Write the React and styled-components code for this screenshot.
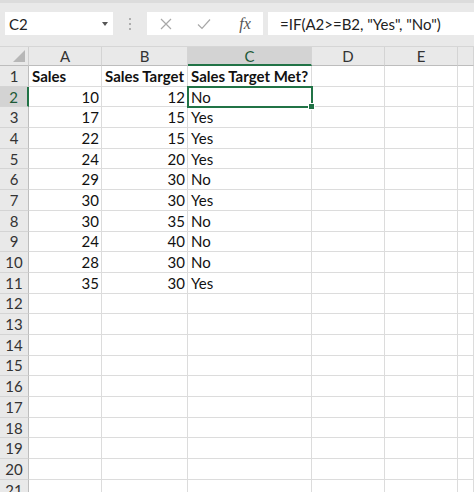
import React from "react";
import styled, { createGlobalStyle } from "styled-components";

const Global = createGlobalStyle`
  html, body { margin: 0; padding: 0; background: #ffffff; }
  body { font-family: Lato, "Open Sans", sans-serif; overflow: hidden; }
`;

const Page = styled.div`
  width: 474px;
  height: 492px;
  overflow: hidden;
  background: #ffffff;
  display: flex;
  flex-direction: column;
`;

const Toolbar = styled.div`
  height: 47px;
  flex: none;
  box-sizing: border-box;
  background: #e9e9e9;
  border-top: 3px solid #dcdcdc;
  border-bottom: 1px solid #d6d6d6;
  display: flex;
  align-items: flex-start;
  padding: 9px 0 0 5px;
`;

const NameBox = styled.div`
  width: 108px;
  height: 23px;
  background: #ffffff;
  display: flex;
  align-items: center;
  justify-content: space-between;
  box-sizing: border-box;
  padding: 0 5px 0 4px;
  font-size: 15px;
  color: #222;
`;

const Caret = styled.span`
  width: 0;
  height: 0;
  border-left: 3.5px solid transparent;
  border-right: 3.5px solid transparent;
  border-top: 4px solid #555;
`;

const Dots = styled.div`
  width: 34px;
  height: 23px;
  display: flex;
  flex-direction: column;
  align-items: center;
  justify-content: center;
  gap: 3px;
  & > span {
    width: 2px;
    height: 2px;
    border-radius: 50%;
    background: #9a9a9a;
  }
`;

const ButtonBox = styled.div`
  width: 116px;
  height: 23px;
  background: #ffffff;
  display: flex;
  align-items: center;
  margin-right: 5px;
`;

const IconSlot = styled.div`
  width: 38px;
  display: flex;
  justify-content: center;
  align-items: center;
`;

const Fx = styled.span`
  font-family: "Liberation Serif", serif;
  font-style: italic;
  font-size: 16px;
  color: #555;
  margin-left: 6px;
`;

const FormulaInput = styled.div`
  flex: 1;
  height: 23px;
  background: #ffffff;
  box-sizing: border-box;
  padding-left: 12px;
  display: flex;
  align-items: center;
  font-size: 15px;
  color: #222;
  white-space: nowrap;
`;

const Grid = styled.div`
  display: grid;
  grid-template-columns: 29px 73px 86px 124px 73px 73px 1fr;
  grid-template-rows: 19px;
  grid-auto-rows: 20.7px;
`;

const Corner = styled.div`
  background: #e9e9e9;
  border-right: 1px solid #cfcfcf;
  border-bottom: 1px solid #bdbdbd;
  position: relative;
  &::after {
    content: "";
    position: absolute;
    right: 3px;
    bottom: 3px;
    width: 0;
    height: 0;
    border-left: 12px solid transparent;
    border-bottom: 12px solid #b7b7b7;
  }
`;

const ColHead = styled.div`
  background: ${(p) => (p.$active ? "#d3d3d3" : "#e9e9e9")};
  border-right: 1px solid #d4d4d4;
  border-bottom: ${(p) => (p.$active ? "2px solid #217346" : "1px solid #bdbdbd")};
  box-sizing: border-box;
  display: flex;
  align-items: center;
  justify-content: center;
  font-size: 15px;
  color: ${(p) => (p.$active ? "#1d5a37" : "#333")};
`;

const RowHead = styled.div`
  background: ${(p) => (p.$active ? "#d3d3d3" : "#e9e9e9")};
  border-right: ${(p) => (p.$active ? "2px solid #217346" : "1px solid #bdbdbd")};
  border-bottom: 1px solid #d4d4d4;
  box-sizing: border-box;
  display: flex;
  align-items: center;
  justify-content: center;
  font-size: 15px;
  color: ${(p) => (p.$active ? "#1d5a37" : "#333")};
`;

const Cell = styled.div`
  position: relative;
  box-sizing: border-box;
  border-right: 1px solid #dcdcdc;
  border-bottom: 1px solid #dcdcdc;
  display: flex;
  align-items: center;
  justify-content: ${(p) => (p.$num ? "flex-end" : "flex-start")};
  padding: ${(p) => (p.$num ? "0 2px 0 0" : "0 0 0 3px")};
  font-size: 15px;
  font-weight: ${(p) => (p.$bold ? 700 : 400)};
  color: #111;
  white-space: nowrap;
  overflow: visible;
  ${(p) =>
    p.$selected &&
    `
    outline: 2px solid #217346;
    outline-offset: -1px;
    z-index: 2;
  `}
`;

const Handle = styled.span`
  position: absolute;
  right: -4px;
  bottom: -4px;
  width: 5px;
  height: 5px;
  background: #217346;
  border: 1px solid #ffffff;
`;

const columns = ["A", "B", "C", "D", "E", ""];

const data = [
  [10, 12, "No"],
  [17, 15, "Yes"],
  [22, 15, "Yes"],
  [24, 20, "Yes"],
  [29, 30, "No"],
  [30, 30, "Yes"],
  [30, 35, "No"],
  [24, 40, "No"],
  [28, 30, "No"],
  [35, 30, "Yes"],
];

export default function App() {
  const rows = [];
  for (let r = 1; r <= 21; r++) {
    const active = r === 2;
    rows.push(
      <RowHead key={`h${r}`} $active={active}>
        {r}
      </RowHead>
    );
    if (r === 1) {
      rows.push(<Cell key="1a" $bold>Sales</Cell>);
      rows.push(<Cell key="1b" $bold>Sales Target</Cell>);
      rows.push(<Cell key="1c" $bold>Sales Target Met?</Cell>);
    } else if (r <= 11) {
      const d = data[r - 2];
      rows.push(<Cell key={`${r}a`} $num>{d[0]}</Cell>);
      rows.push(<Cell key={`${r}b`} $num>{d[1]}</Cell>);
      rows.push(
        <Cell key={`${r}c`} $selected={active}>
          {d[2]}
          {active && <Handle />}
        </Cell>
      );
    } else {
      rows.push(<Cell key={`${r}a`} />);
      rows.push(<Cell key={`${r}b`} />);
      rows.push(<Cell key={`${r}c`} />);
    }
    rows.push(<Cell key={`${r}d`} />);
    rows.push(<Cell key={`${r}e`} />);
    rows.push(<Cell key={`${r}f`} />);
  }

  return (
    <Page>
      <Global />
      <Toolbar>
        <NameBox>
          C2
          <Caret />
        </NameBox>
        <Dots>
          <span />
          <span />
          <span />
        </Dots>
        <ButtonBox>
          <IconSlot>
            <svg width="12" height="12" viewBox="0 0 12 12">
              <path d="M1 1 L11 11 M11 1 L1 11" stroke="#a8a8a8" strokeWidth="1.2" fill="none" />
            </svg>
          </IconSlot>
          <IconSlot>
            <svg width="14" height="12" viewBox="0 0 14 12">
              <path d="M1 6.5 L5 10.5 L13 1.5" stroke="#a8a8a8" strokeWidth="1.2" fill="none" />
            </svg>
          </IconSlot>
          <IconSlot>
            <Fx>fx</Fx>
          </IconSlot>
        </ButtonBox>
        <FormulaInput>=IF(A2&gt;=B2, "Yes", "No")</FormulaInput>
      </Toolbar>
      <Grid>
        <Corner />
        {columns.map((c) => (
          <ColHead key={c || "f"} $active={c === "C"}>
            {c}
          </ColHead>
        ))}
        {rows}
      </Grid>
    </Page>
  );
}
